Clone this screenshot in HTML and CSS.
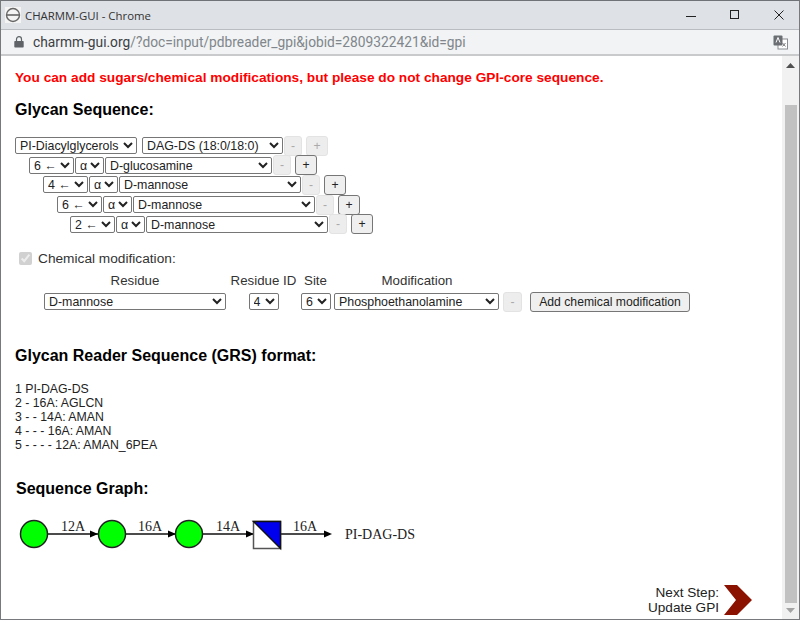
FILE: index.html
```html
<!DOCTYPE html>
<html lang="en">
<head>
<meta charset="utf-8">
<title>CHARMM-GUI - Chrome</title>
<link rel="stylesheet" href="styles.css">
</head>
<body>
<div class="window">
  <header class="titlebar">
    <svg class="favicon" width="16" height="16" viewBox="0 0 16 16"><circle cx="8" cy="8" r="6.5" fill="none" stroke="#666" stroke-width="1.4"/><path d="M2 8h12" stroke="#666" stroke-width="1.6"/></svg>
    <span class="title">CHARMM-GUI - Chrome</span>
    <div class="winctl">
      <svg width="12" height="12" viewBox="0 0 12 12"><path d="M1 7.500h10" stroke="#222" stroke-width="1"/></svg>
      <svg width="12" height="12" viewBox="0 0 12 12"><rect x="1.500" y="1.500" width="8" height="8" fill="none" stroke="#222" stroke-width="1"/></svg>
      <svg width="12" height="12" viewBox="0 0 12 12"><path d="M1.500 1.500l9 9M10.500 1.500l-9 9" stroke="#222" stroke-width="1"/></svg>
    </div>
  </header>
  <div class="addressbar">
    <svg class="lock" width="10" height="12" viewBox="0 0 10 12"><path d="M1 5h8a.7.7 0 0 1 .7.7v5a.7.7 0 0 1-.7.7H1a.7.7 0 0 1-.7-.7v-5A.7.7 0 0 1 1 5z" fill="#5f6368"/><path d="M2.500 5V3.200a2.500 2.500 0 0 1 5 0V5" fill="none" stroke="#5f6368" stroke-width="1.200"/></svg>
    <span class="url"><span class="host">charmm-gui.org</span>/?doc=input/pdbreader_gpi&amp;jobid=2809322421&amp;id=gpi</span>
    <svg class="translate" width="15" height="15" viewBox="0 0 15 15"><rect x="5" y="4" width="9.500" height="10" fill="#fff" stroke="#8a8d91" stroke-width="1"/><rect x="0.500" y="0.500" width="9" height="10" rx="1" fill="#6b6e72"/><path d="M3 7.500l2-5 2 5" fill="none" stroke="#fff" stroke-width="1"/><path d="M9.500 8l3 3.500M12.500 8l-3 3.500" stroke="#777" stroke-width="1"/></svg>
  </div>
  <div class="viewport">
    <main class="content">
      <p class="warning">You can add sugars/chemical modifications, but please do not change GPI-core sequence.</p>
      <h2 class="heading heading-glycan">Glycan Sequence:</h2>

      <div class="seq">
        <div class="row">
          <select class="sel w-lipid"><option>PI-Diacylglycerols</option></select>
          <select class="sel w-dag"><option>DAG-DS (18:0/18:0)</option></select>
          <button class="btn minus" disabled>-</button>
          <button class="btn plus" disabled>+</button>
        </div>
        <div class="row level1">
          <select class="sel w-link"><option>6 ←</option></select>
          <select class="sel w-anomer"><option>α</option></select>
          <select class="sel w-sugar"><option>D-glucosamine</option></select>
          <button class="btn minus" disabled>-</button>
          <button class="btn plus">+</button>
        </div>
        <div class="row level2">
          <select class="sel w-link"><option>4 ←</option></select>
          <select class="sel w-anomer"><option>α</option></select>
          <select class="sel w-sugar-b"><option>D-mannose</option></select>
          <button class="btn minus" disabled>-</button>
          <button class="btn plus">+</button>
        </div>
        <div class="row level3">
          <select class="sel w-link"><option>6 ←</option></select>
          <select class="sel w-anomer"><option>α</option></select>
          <select class="sel w-sugar-b"><option>D-mannose</option></select>
          <button class="btn minus" disabled>-</button>
          <button class="btn plus">+</button>
        </div>
        <div class="row level4">
          <select class="sel w-link"><option>2 ←</option></select>
          <select class="sel w-anomer"><option>α</option></select>
          <select class="sel w-sugar-b"><option>D-mannose</option></select>
          <button class="btn minus" disabled>-</button>
          <button class="btn plus">+</button>
        </div>
      </div>

      <label class="chem-check"><input type="checkbox" class="check" checked disabled> Chemical modification:</label>
      <div class="chem-grid">
        <span class="col-label">Residue</span>
        <span class="col-label">Residue ID</span>
        <span class="col-label label-site">Site</span>
        <span class="col-label">Modification</span>
        <span></span>
        <span></span>
        <select class="sel w-residue"><option>D-mannose</option></select>
        <select class="sel w-id"><option>4</option></select>
        <select class="sel w-site"><option>6</option></select>
        <select class="sel w-mod"><option>Phosphoethanolamine</option></select>
        <button class="btn minus minus-chem" disabled>-</button>
        <button class="btn add">Add chemical modification</button>
      </div>

      <h2 class="heading heading-grs">Glycan Reader Sequence (GRS) format:</h2>
      <div class="grs">1 PI-DAG-DS<br>2 - 16A: AGLCN<br>3 - - 14A: AMAN<br>4 - - - 16A: AMAN<br>5 - - - - 12A: AMAN_6PEA</div>

      <h2 class="heading heading-graph">Sequence Graph:</h2>
      <svg class="graph" width="420" height="50" viewBox="0 0 420 50">
        <g stroke="#111" stroke-width="1.500" fill="none">
          <path d="M34 26H99M112 26H176M189 26H253M281 26H326"/>
        </g>
        <g fill="#000">
          <path d="M90 22.500l8 3.500-8 3.500z"/>
          <path d="M168 22.500l8 3.500-8 3.500z"/>
          <path d="M246 22.500l8 3.500-8 3.500z"/>
          <path d="M324 22.500l8 3.500-8 3.500z"/>
        </g>
        <g fill="#00ff00" stroke="#222" stroke-width="1.500">
          <circle cx="34" cy="26" r="13.500"/>
          <circle cx="112" cy="26" r="13.500"/>
          <circle cx="189" cy="26" r="13.500"/>
        </g>
        <rect x="253.500" y="13.500" width="27" height="27" fill="#fff" stroke="#555" stroke-width="1.500"/>
        <path d="M253.500 13.500H280.500V40.500Z" fill="#0000ee" stroke="#111" stroke-width="1.500"/>
        <g class="graph-text">
          <text x="73" y="23" text-anchor="middle">12A</text>
          <text x="150" y="23" text-anchor="middle">16A</text>
          <text x="228" y="23" text-anchor="middle">14A</text>
          <text x="305" y="23" text-anchor="middle">16A</text>
          <text x="345" y="31">PI-DAG-DS</text>
        </g>
      </svg>

      <div class="next">
        <div class="next-label">Next Step:<br>Update GPI</div>
        <svg class="next-arrow" width="28" height="30" viewBox="0 0 28 30"><path d="M0 0H13L28 15 13 30H0L12 15Z" fill="#8b1100"/></svg>
      </div>
    </main>
    <aside class="scrollbar">
      <svg class="arrow" width="9" height="5" viewBox="0 0 9 5"><path d="M4.500 0L9 5H0z" fill="#505050"/></svg>
      <div class="thumb"></div>
      <svg class="arrow" width="9" height="5" viewBox="0 0 9 5"><path d="M0 0H9L4.500 5z" fill="#a3a3a3"/></svg>
    </aside>
  </div>
</div>
</body>
</html>
```

FILE: styles.css
```css
* { box-sizing: border-box; }
html, body { margin: 0; padding: 0; height: 100%; overflow: hidden; }
body { font-family: "Liberation Sans", Arial, sans-serif; background: #fff; color: #222; }

.window {
  width: 800px; height: 620px;
  display: flex; flex-direction: column;
  border-top: 1px solid #6f7276;
  border-left: 1px solid #77797c;
  border-right: 1px solid #77797c;
  border-bottom: 1px solid #77797c;
  overflow: hidden;
}

.titlebar {
  height: 29px; flex: none;
  background: #dee1e6;
  display: flex; align-items: center;
  padding-left: 4px;
  border-bottom: 1px solid #b9bcc0;
}
.favicon { background: #f4f4f4; margin-right: 4px; }
.title { font: 11.4px "Open Sans", sans-serif; color: #333; }
.winctl { margin-left: auto; display: flex; gap: 32px; padding-right: 14px; }

.addressbar {
  height: 26px; flex: none;
  background: #f1f3f4;
  display: flex; align-items: center;
  padding-left: 13px; padding-right: 10px;
  border-bottom: 2px solid #c8cacc;
}
.lock { margin-right: 9px; }
.url { font: 13.75px Roboto, sans-serif; color: #80868b; }
.host { color: #3c4043; }
.translate { margin-left: auto; margin-right: 1px; }

.viewport { flex: 1; display: flex; min-height: 0; }
.content { flex: 1; padding: 13px 0 0 14px; min-width: 0; position: relative; overflow: hidden; }

.warning { margin: 0; font-size: 13.7px; font-weight: bold; color: #f00; line-height: 18px; }
.heading { margin: 0; font-size: 16px; font-weight: bold; color: #000; line-height: 20px; }
.heading-glycan { margin-top: 13px; }
.heading-grs { margin-top: 34px; }
.heading-graph { margin-top: 27px; margin-left: 1px; }

.seq { margin-top: 17px; display: flex; flex-direction: column; gap: 2.7px; }
.row { display: flex; align-items: center; height: 17px; gap: 1px; }
.level1 { padding-left: 14px; }
.level2 { padding-left: 28px; }
.level3 { padding-left: 42px; }
.level4 { padding-left: 55px; }

.sel {
  font: 12.4px "Liberation Sans", Arial, sans-serif;
  height: 17px; padding: 0; margin: 0;
  background: #fff; color: #222;
  border: 1px solid #767676; border-radius: 2px;
}
.w-lipid { width: 122px; margin-right: 4px; }
.w-dag { width: 141px; }
.w-link { width: 45px; }
.w-anomer { width: 29px; }
.w-sugar { width: 167px; }
.w-sugar-b { width: 182px; }
.w-residue { width: 182px; }
.w-id { width: 30px; justify-self: center; }
.w-site { width: 30px; }
.w-mod { width: 165px; }

.btn {
  font: 12.2px "Liberation Sans", Arial, sans-serif;
  height: 20px; padding: 0; margin: 0;
  background: #efefef; color: #222;
  border: 1px solid #767676; border-radius: 3px;
}
.btn:disabled { border-color: #e3e3e3; color: #aaa; background: #ededed; }
.minus { width: 18px; }
.plus { width: 22px; margin-left: 3px; }
.minus-chem { width: 19px; margin-left: 3px; }
.add { width: 160px; }

.chem-check { display: flex; align-items: center; gap: 6px; margin-top: 17px; margin-left: 4px; font-size: 13.7px; line-height: 18px; color: #333; }
.check { margin: 0; width: 13px; height: 13px; }

.chem-grid {
  margin-top: 5px; margin-left: 29px;
  display: grid;
  grid-template-columns: 182px 75px 33px 166px 30px 160px;
  row-gap: 4px;
  align-items: center;
  justify-items: start;
}
.col-label { font-size: 13.3px; line-height: 15px; color: #333; justify-self: center; white-space: nowrap; }
.label-site { margin-right: 4px; }

.grs { margin-top: 16px; font-size: 12.3px; line-height: 14px; color: #222; }

.graph { display: block; margin: 9px 0 0 -15px; }
.graph-text { font: 14px "Liberation Serif", serif; fill: #222; }

.next { position: absolute; right: 30px; top: 529px; display: flex; align-items: flex-start; gap: 5px; }
.next-label { font-size: 13.6px; line-height: 15px; text-align: right; color: #222; }

.scrollbar {
  width: 17px; flex: none;
  background: #f1f1f1;
  display: flex; flex-direction: column; align-items: center;
  padding: 7px 0 6px;
}
.thumb { flex: 1; width: 12px; background: #c1c1c1; margin: 37px 0 5px; }
.arrow { display: block; flex: none; }
```
